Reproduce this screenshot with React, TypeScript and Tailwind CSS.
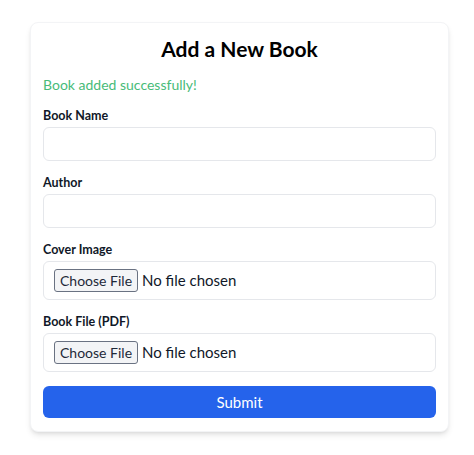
import React, { useState } from 'react';

const Field: React.FC<{ label: string; children: React.ReactNode }> = ({ label, children }) => (
    <div className="flex flex-col">
        <label className="text-[12.5px] font-bold leading-[18px] text-gray-900 mb-0.5">{label}</label>
        {children}
    </div>
)

export default function App() {
    const [name, setName] = useState('')
    const [author, setAuthor] = useState('')

    const fileClass =
        "w-full py-[7px] px-[10px] rounded-md border border-gray-200 bg-white text-[15px] leading-[22px] text-gray-900 " +
        "file:mr-1 file:h-[23px] file:px-[5px] file:text-[14px] file:text-gray-800 file:bg-gray-100 " +
        "file:border file:border-gray-500 file:rounded-[3px]"

    return (
        <div className="min-h-screen bg-white pt-[22px] pl-[30px]" style={{ fontFamily: 'Lato, "Noto Sans", sans-serif' }}>
            <main className="w-[419px] bg-white rounded-lg border border-gray-100 shadow-md px-[12px] pt-[12px] pb-[13px]">
                <h2 className="text-center text-[21px] font-bold leading-[28px] text-black">Add a New Book</h2>
                <p className="mt-[10px] text-[14px] leading-6 text-[#48bb78]">Book added successfully!</p>

                <form className="mt-[10px] flex flex-col gap-[13px]" onSubmit={(e) => e.preventDefault()}>
                    <Field label="Book Name">
                        <input
                            type="text"
                            value={name}
                            onChange={(e) => setName(e.target.value)}
                            className="w-full h-[34px] px-3 rounded-md border border-gray-200 outline-none"/>
                    </Field>
                    <Field label="Author">
                        <input
                            type="text"
                            value={author}
                            onChange={(e) => setAuthor(e.target.value)}
                            className="w-full h-[34px] px-3 rounded-md border border-gray-200 outline-none"/>
                    </Field>
                    <Field label="Cover Image">
                        <input type="file" accept="image/*" className={fileClass}/>
                    </Field>
                    <Field label="Book File (PDF)">
                        <input type="file" accept="application/pdf" className={fileClass}/>
                    </Field>
                    <button
                        type="submit"
                        className="mt-px h-8 w-full rounded-md bg-[#2563eb] text-white text-[15px]">Submit</button>
                </form>
            </main>
        </div>
    )
}
